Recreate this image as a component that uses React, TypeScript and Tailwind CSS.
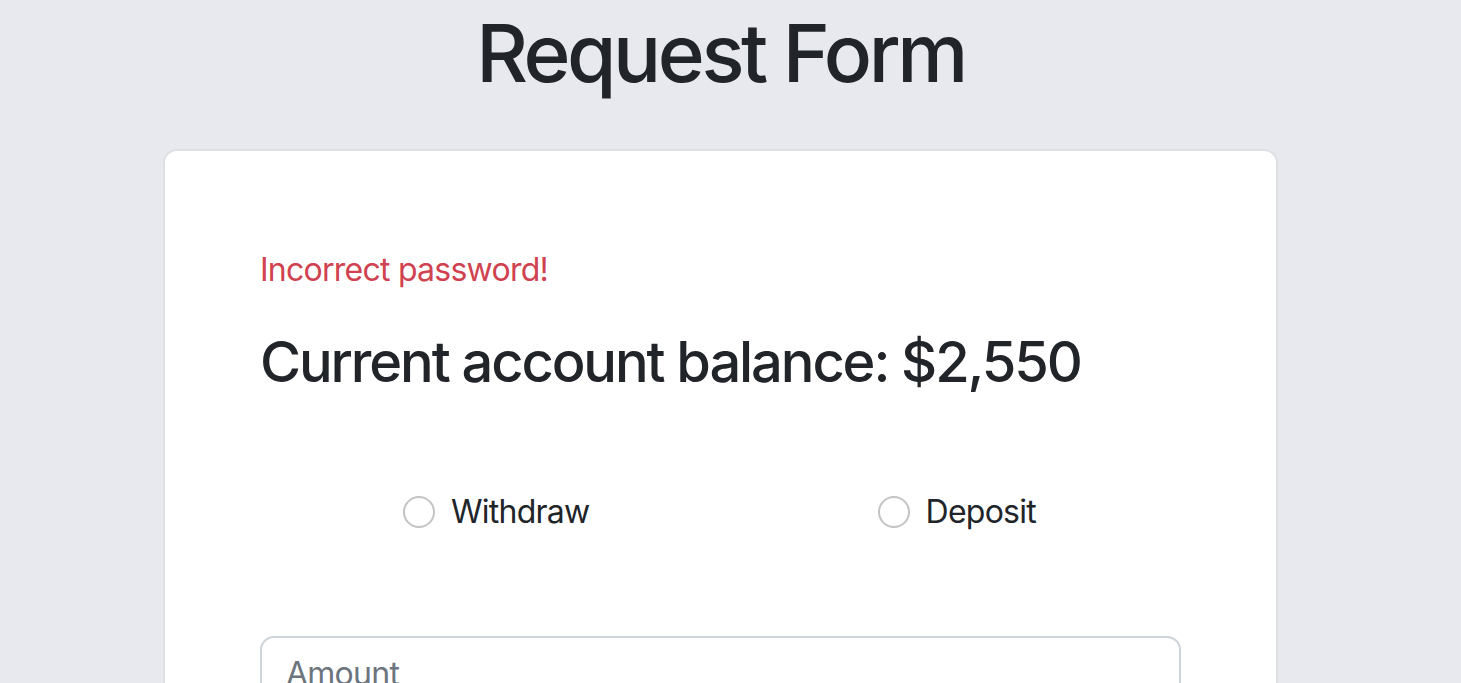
import React from "react";

export default function App() {
  return (
    <div
      className="min-h-screen w-full bg-[#e8e9ee] pr-[20px] text-[#212529]"
      style={{ fontFamily: "Inter, 'Noto Sans', sans-serif" }}
    >
      <h1 className="pt-[5px] text-center text-[80px] font-medium leading-[1.2] tracking-[-3.4px]">
        Request Form
      </h1>
      <div className="mx-auto mt-[48px] w-[1115px] rounded-[14px] border-2 border-[#dfe0e4] bg-white px-[95px] pt-[95px] pb-[96px]">
        <p className="text-[32px] leading-[48px] tracking-[-0.75px] text-[#d0424f]">Incorrect password!</p>
        <h3 className="mt-[35px] text-[56px] font-medium leading-[1.2] tracking-[-2.1px]">
          Current account balance: $2,550
        </h3>
        <div className="mr-[-6px] mt-[92px] grid grid-cols-2 pl-[6px]">
          <label className="flex items-center justify-center gap-[16px] text-[32px] leading-[48px] tracking-[-0.75px]">
            <span className="h-[32px] w-[32px] rounded-full border-2 border-[#c4c4c4] bg-white" />
            <span>Withdraw</span>
          </label>
          <label className="flex items-center justify-center gap-[16px] text-[32px] leading-[48px] tracking-[-0.75px]">
            <span className="h-[32px] w-[32px] rounded-full border-2 border-[#c4c4c4] bg-white" />
            <span>Deposit</span>
          </label>
        </div>
        <input
          type="text"
          placeholder="Amount"
          className="mt-[100px] block h-[74px] w-full rounded-[14px] border-2 border-[#ced4da] px-[24px] py-[12px] text-[32px] leading-[48px] tracking-[-0.75px] outline-none placeholder:text-[#6c757d]"
        />
      </div>
    </div>
  );
}
